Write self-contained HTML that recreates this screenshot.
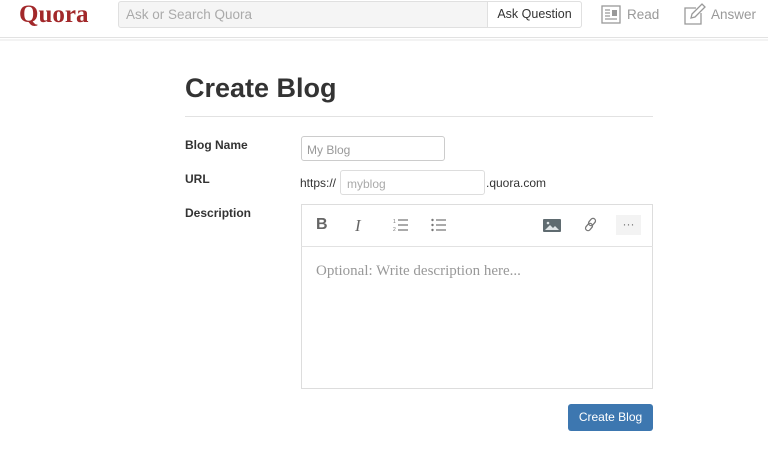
<!DOCTYPE html>
<html><head><meta charset="utf-8"><style>
*{margin:0;padding:0;box-sizing:border-box}
body{width:768px;height:470px;background:#fff;font-family:"Liberation Sans",sans-serif;position:relative;overflow:hidden;color:#333}
.a{position:absolute}
</style></head><body>
<div class="a" style="left:0;top:0;width:768px;height:38px;background:#fff;border-bottom:1px solid #e2e2e2"></div>
<div class="a" style="left:0;top:39px;width:768px;height:2px;background:#f3f3f3"></div>
<div class="a" style="left:19px;top:1px;font-family:'Liberation Serif',serif;font-weight:bold;font-size:25px;color:#a2282a">Quora</div>
<div class="a" style="left:118px;top:1px;width:464px;height:27px;background:#f5f5f5;border:1px solid #e0e0e0;border-radius:3px"></div>
<div class="a" style="left:126px;top:7px;font-size:13.5px;color:#aaa">Ask or Search Quora</div>
<div class="a" style="left:487px;top:1px;width:95px;height:27px;background:#fff;border:1px solid #e0e0e0;border-radius:0 3px 3px 0;font-size:12.5px;color:#333;text-align:center;line-height:25px">Ask Question</div>
<svg class="a" style="left:601px;top:5px" width="20" height="19" viewBox="0 0 20 19"><rect x="1" y="1" width="18" height="17" fill="none" stroke="#999" stroke-width="1.3"/><path d="M4 5h5M4 8h5M4 11h5M4 14h12" stroke="#999" stroke-width="1.3"/><rect x="11" y="5" width="5" height="6" fill="#999"/></svg>
<div class="a" style="left:627px;top:7px;font-size:13.5px;color:#999">Read</div>
<svg class="a" style="left:683px;top:3px" width="24" height="22" viewBox="0 0 24 22"><path d="M13 5H2v16h16V10" fill="none" stroke="#999" stroke-width="1.3"/><path d="M8 15l1-4 10-10 3 3-10 10z" fill="none" stroke="#999" stroke-width="1.3"/></svg>
<div class="a" style="left:711px;top:7px;font-size:13.5px;color:#999">Answer</div>

<div class="a" style="left:185px;top:73px;font-size:27px;font-weight:bold;color:#333">Create Blog</div>
<div class="a" style="left:185px;top:116px;width:468px;height:1px;background:#e2e2e2"></div>

<div class="a" style="left:185px;top:138px;font-size:12px;font-weight:bold">Blog Name</div>
<div class="a" style="left:185px;top:172px;font-size:12px;font-weight:bold">URL</div>
<div class="a" style="left:185px;top:206px;font-size:12px;font-weight:bold">Description</div>

<div class="a" style="left:301px;top:136px;width:144px;height:25px;border:1px solid #ccc;border-radius:3px;font-size:12px;color:#999;padding:6px 5px">My Blog</div>
<div class="a" style="left:300px;top:176px;font-size:12px;color:#333">https://</div>
<div class="a" style="left:340px;top:170px;width:145px;height:25px;border:1px solid #ddd;border-radius:3px;font-size:12px;color:#aaa;padding:6px 6px">myblog</div>
<div class="a" style="left:486px;top:176px;font-size:12px;color:#333">.quora.com</div>

<div class="a" style="left:301px;top:204px;width:352px;height:185px;border:1px solid #ddd"></div>
<div class="a" style="left:301px;top:246px;width:352px;height:1px;background:#e2e2e2"></div>
<div class="a" style="left:316px;top:216px;font-size:16px;font-weight:bold;color:#666">B</div>
<div class="a" style="left:355px;top:216px;font-size:17px;font-style:italic;font-family:'Liberation Serif',serif;color:#666">I</div>
<svg class="a" style="left:393px;top:218px" width="15" height="14"><path d="M5 2h10M5 7h10M5 12h10" stroke="#777" stroke-width="1.3"/><text x="0" y="5" font-size="5" fill="#777">1</text><text x="0" y="13" font-size="5" fill="#777">2</text></svg>
<svg class="a" style="left:431px;top:218px" width="15" height="14"><path d="M5 2h10M5 7h10M5 12h10" stroke="#777" stroke-width="1.3"/><circle cx="1.5" cy="2" r="1.2" fill="#777"/><circle cx="1.5" cy="7" r="1.2" fill="#777"/><circle cx="1.5" cy="12" r="1.2" fill="#777"/></svg>
<svg class="a" style="left:543px;top:219px" width="18" height="13"><rect width="18" height="13" rx="1" fill="#5f6b70"/><path d="M2 11l5-5 3 3 2-2 4 4z" fill="#dfe4e6"/><circle cx="5" cy="4" r="1.3" fill="#dfe4e6"/></svg>
<svg class="a" style="left:583px;top:217px" width="15" height="15" viewBox="0 0 15 15"><g fill="none" stroke="#777" stroke-width="1.3"><rect x="6.5" y="1" width="5" height="8" rx="2.5" transform="rotate(40 9 5)"/><rect x="3.5" y="6" width="5" height="8" rx="2.5" transform="rotate(40 6 10)"/></g></svg>
<div class="a" style="left:616px;top:215px;width:25px;height:20px;background:#f3f3f3;font-size:12px;color:#777;text-align:center;line-height:18px">···</div>
<div class="a" style="left:316px;top:263px;font-family:'Liberation Serif',serif;font-size:15px;color:#999">Optional: Write description here...</div>

<div class="a" style="left:568px;top:404px;width:85px;height:27px;background:#3d77b0;border-radius:3px;color:#fff;font-size:12px;text-align:center;line-height:27px">Create Blog</div>
</body></html>
